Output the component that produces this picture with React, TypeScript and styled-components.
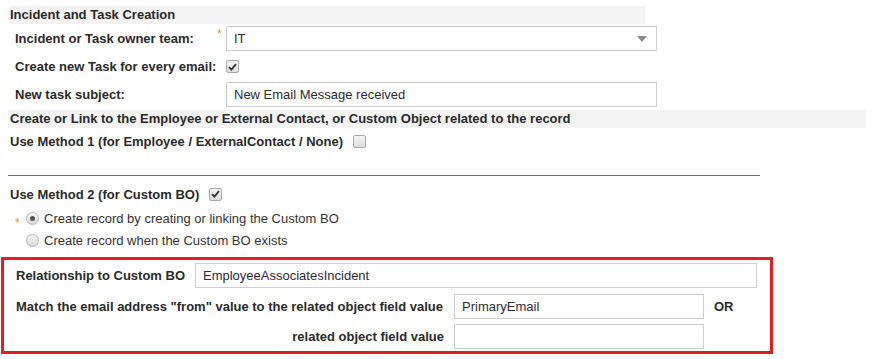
import React from 'react';
import styled, {createGlobalStyle} from 'styled-components';

const GlobalStyle = createGlobalStyle`
    body {
        margin: 0;
        background: #ffffff;
        font-family: "Liberation Sans", Arial, sans-serif;
        font-size: 13px;
        color: #333333;
    }
`

type AlignProps = {
    align?: 'left' | 'right'
}

const Page = styled.div`
    width: 874px;
    height: 359px;
    padding-top: 6px;
    box-sizing: border-box;
    overflow: hidden;
`

const SectionHeader = styled.div<{width: number, left: number, top?: number}>`
    margin: ${props => props.top || 0}px 0 0 ${props => props.left}px;
    width: ${props => props.width}px;
    height: 18px;
    line-height: 18px;
    padding-left: ${props => 10 - props.left}px;
    box-sizing: border-box;
    background-color: #f3f3f3;
    font-weight: bold;
    color: #2a2a2a;
`

const FormGrid = styled.div`
    display: grid;
    grid-template-columns: 211px 431px;
    grid-template-rows: 25px 29px 25px;
    row-gap: 1px;
    margin: 2px 0 0 15px;
`

const Label = styled.div<AlignProps & {width?: number}>`
    position: relative;
    display: flex;
    align-items: center;
    justify-content: ${props => props.align === 'right' ? 'flex-end' : 'flex-start'};
    width: ${props => props.width ? props.width + 'px' : 'auto'};
    flex-shrink: 0;
    font-weight: bold;
    color: #2a2a2a;
    white-space: nowrap;
`

const Required = styled.span`
    position: absolute;
    right: 4px;
    top: 1px;
    color: #f0953a;
    font-size: 12px;
    font-weight: normal;
`

const TextBox = styled.div<{width?: number}>`
    display: flex;
    align-items: center;
    height: 25px;
    width: ${props => props.width ? props.width + 'px' : 'auto'};
    padding: 0 7px;
    box-sizing: border-box;
    border: 1px solid #cfcfcf;
    background: #ffffff;
    color: #2f2a3a;
    font-size: 13px;
`

const SelectBox = styled(TextBox)`
    justify-content: space-between;
    padding-right: 9px;
`

const Arrow = styled.span`
    width: 0;
    height: 0;
    border-left: 5px solid transparent;
    border-right: 5px solid transparent;
    border-top: 6px solid #8a8a8a;
`

const CheckCell = styled.div`
    display: flex;
    align-items: center;
`

const Check = styled.span`
    display: inline-flex;
    align-items: center;
    justify-content: center;
    width: 11px;
    height: 11px;
    border: 1px solid #a9a9a9;
    border-radius: 2px;
    background: linear-gradient(#f4f4f4, #dcdcdc);
`

const Radio = styled.span<{checked?: boolean}>`
    display: inline-flex;
    align-items: center;
    justify-content: center;
    width: 11px;
    height: 11px;
    border: 1px solid #b5b5b5;
    border-radius: 50%;
    background: linear-gradient(#f6f6f6, #d9d9d9);
    &::after {
        content: '';
        display: ${props => props.checked ? 'block' : 'none'};
        width: 5px;
        height: 5px;
        border-radius: 50%;
        background: #555555;
    }
`

const MethodRow = styled.div<{top: number}>`
    display: flex;
    align-items: center;
    gap: 10px;
    height: 18px;
    margin: ${props => props.top}px 0 0 10px;
    font-weight: bold;
    color: #2a2a2a;
`

const Divider = styled.hr`
    margin: 25px 0 0 8px;
    width: 752px;
    border: none;
    border-top: 1px solid #6a6a6a;
    height: 0;
`

const RadioList = styled.div`
    display: flex;
    flex-direction: column;
    gap: 4px;
    margin: 6px 0 0 15px;
`

const RadioRow = styled.label`
    display: flex;
    align-items: center;
    height: 18px;
    color: #333333;
`

const RadioStar = styled.span<{visible?: boolean}>`
    width: 11px;
    color: #f0953a;
    font-size: 12px;
    padding-top: 9px;
    visibility: ${props => props.visible ? 'visible' : 'hidden'};
`

const RadioText = styled.span`
    margin-left: 5px;
`

const Highlight = styled.div`
    margin: 8px 0 0 1px;
    width: 772px;
    height: 97px;
    box-sizing: border-box;
    border: 3px solid #e31d25;
    padding: 3px 0 0 12px;
`

const InlineRow = styled.div`
    display: flex;
    align-items: center;
    height: 25px;
`

const MatchGrid = styled.div`
    display: grid;
    grid-template-columns: 428px 250px auto;
    grid-template-rows: 25px 25px;
    column-gap: 10px;
    row-gap: 5px;
    margin-top: 6px;
`

const OrText = styled.div`
    display: flex;
    align-items: center;
    font-weight: bold;
    color: #2a2a2a;
`

const CheckMark = () => (
    <svg width="9" height="8" viewBox="0 0 9 8">
        <path d="M1 4.2 L3.4 6.6 L8 1.2" fill="none" stroke="#333" strokeWidth="1.8"/>
    </svg>
)

export default function App() {
    return (
        <Page>
            <GlobalStyle/>
            <SectionHeader left={10} width={635}>Incident and Task Creation</SectionHeader>
            <FormGrid>
                <Label>Incident or Task owner team:<Required>*</Required></Label>
                <SelectBox>
                    <span>IT</span>
                    <Arrow/>
                </SelectBox>
                <Label>Create new Task for every email:</Label>
                <CheckCell><Check><CheckMark/></Check></CheckCell>
                <Label>New task subject:</Label>
                <TextBox>New Email Message received</TextBox>
            </FormGrid>

            <SectionHeader left={8} width={858} top={3}>
                Create or Link to the Employee or External Contact, or Custom Object related to the record
            </SectionHeader>
            <MethodRow top={4}>
                Use Method 1 (for Employee / ExternalContact / None)
                <Check/>
            </MethodRow>
            <Divider/>
            <MethodRow top={9}>
                Use Method 2 (for Custom BO)
                <Check><CheckMark/></Check>
            </MethodRow>
            <RadioList>
                <RadioRow>
                    <RadioStar visible>*</RadioStar>
                    <Radio checked/>
                    <RadioText>Create record by creating or linking the Custom BO</RadioText>
                </RadioRow>
                <RadioRow>
                    <RadioStar/>
                    <Radio/>
                    <RadioText>Create record when the Custom BO exists</RadioText>
                </RadioRow>
            </RadioList>

            <Highlight>
                <InlineRow>
                    <Label width={179}>Relationship to Custom BO</Label>
                    <TextBox width={562}>EmployeeAssociatesIncident</TextBox>
                </InlineRow>
                <MatchGrid>
                    <Label>Match the email address "from" value to the related object field value</Label>
                    <TextBox>PrimaryEmail</TextBox>
                    <OrText>OR</OrText>
                    <Label align="right">related object field value</Label>
                    <TextBox/>
                    <div/>
                </MatchGrid>
            </Highlight>
        </Page>
    )
}
